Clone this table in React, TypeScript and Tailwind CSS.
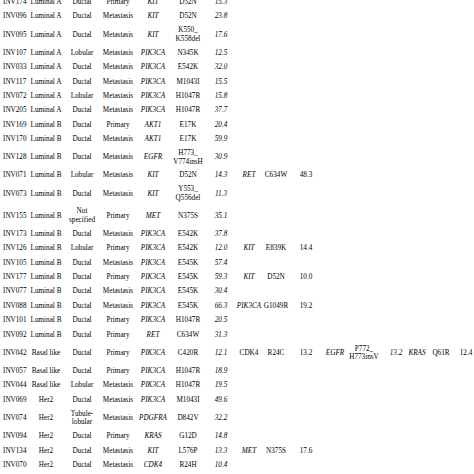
import React from "react";

type Row = { d: string[]; tall?: boolean };

const rows: Row[] = [
  { d: ["INV174", "Luminal A", "Ductal", "Primary", "KIT", "D52N", "15.3"] },
  { d: ["INV096", "Luminal A", "Ductal", "Metastasis", "KIT", "D52N", "23.8"] },
  { d: ["INV095", "Luminal A", "Ductal", "Metastasis", "KIT", "K550_|K558del", "17.6"], tall: true },
  { d: ["INV107", "Luminal A", "Lobular", "Metastasis", "PIK3CA", "N345K", "12.5"] },
  { d: ["INV033", "Luminal A", "Ductal", "Metastasis", "PIK3CA", "E542K", "32.0"] },
  { d: ["INV117", "Luminal A", "Ductal", "Metastasis", "PIK3CA", "M1043I", "15.5"] },
  { d: ["INV072", "Luminal A", "Lobular", "Metastasis", "PIK3CA", "H1047R", "15.8"] },
  { d: ["INV205", "Luminal A", "Ductal", "Metastasis", "PIK3CA", "H1047R", "37.7"] },
  { d: ["INV169", "Luminal B", "Ductal", "Primary", "AKT1", "E17K", "20.4"] },
  { d: ["INV170", "Luminal B", "Ductal", "Metastasis", "AKT1", "E17K", "59.9"] },
  { d: ["INV128", "Luminal B", "Ductal", "Metastasis", "EGFR", "H773_|V774insH", "30.9"], tall: true },
  { d: ["INV071", "Luminal B", "Lobular", "Metastasis", "KIT", "D52N", "14.3", "RET", "C634W", "48.3"] },
  { d: ["INV073", "Luminal B", "Ductal", "Metastasis", "KIT", "Y553_|Q556del", "11.3"], tall: true },
  { d: ["INV155", "Luminal B", "Not|specified", "Primary", "MET", "N375S", "35.1"], tall: true },
  { d: ["INV173", "Luminal B", "Ductal", "Metastasis", "PIK3CA", "E542K", "37.8"] },
  { d: ["INV126", "Luminal B", "Lobular", "Primary", "PIK3CA", "E542K", "12.0", "KIT", "E839K", "14.4"] },
  { d: ["INV105", "Luminal B", "Ductal", "Metastasis", "PIK3CA", "E545K", "57.4"] },
  { d: ["INV177", "Luminal B", "Ductal", "Primary", "PIK3CA", "E545K", "59.3", "KIT", "D52N", "10.0"] },
  { d: ["INV077", "Luminal B", "Ductal", "Metastasis", "PIK3CA", "E545K", "30.4"] },
  { d: ["INV088", "Luminal B", "Ductal", "Metastasis", "PIK3CA", "E545K", "66.3", "PIK3CA", "G1049R", "19.2"] },
  { d: ["INV101", "Luminal B", "Ductal", "Primary", "PIK3CA", "H1047R", "20.5"] },
  { d: ["INV092", "Luminal B", "Ductal", "Primary", "RET", "C634W", "31.3"] },
  {
    d: ["INV042", "Basal like", "Ductal", "Primary", "PIK3CA", "C420R", "12.1", "~CDK4", "R24C", "13.2", "EGFR", "P772_|H773insV", "13.2", "KRAS", "Q61R", "12.4"],
    tall: true,
  },
  { d: ["INV057", "Basal like", "Ductal", "Primary", "PIK3CA", "H1047R", "18.9"] },
  { d: ["INV044", "Basal like", "Lobular", "Metastasis", "PIK3CA", "H1047R", "19.5"] },
  { d: ["INV069", "Her2", "Ductal", "Metastasis", "PIK3CA", "M1043I", "49.6"] },
  { d: ["INV074", "Her2", "Tubule-|lobular", "Metastasis", "PDGFRA", "D842V", "32.2"], tall: true },
  { d: ["INV094", "Her2", "Ductal", "Primary", "KRAS", "G12D", "14.8"] },
  { d: ["INV134", "Her2", "Ductal", "Metastasis", "KIT", "L576P", "13.3", "MET", "N375S", "17.6"] },
  { d: ["INV070", "Her2", "Ductal", "Metastasis", "CDK4", "R24H", "10.4"] },
];

const italicCols = new Set([4, 6, 7, 10, 12, 13]);

function Cell({ value, col }: { value: string; col: number }) {
  let v = value;
  let italic = italicCols.has(col);
  if (v.startsWith("~")) {
    v = v.slice(1);
    italic = false;
  }
  const lines = v.split("|");
  return (
    <div
      className={
        (col === 0 ? "items-start pl-[3px] " : "items-center ") +
        "flex flex-col justify-center whitespace-nowrap leading-[8.5px] " +
        (italic ? "italic" : "")
      }
    >
      {lines.map((l, i) => (
        <div key={i}>{l}</div>
      ))}
    </div>
  );
}

export default function App() {
  return (
    <div className="w-[474px] h-[474px] overflow-hidden bg-white">
      <div
        className="-mt-[5px] w-[480px] text-[7.2px] text-black"
        style={{ fontFamily: '"Liberation Serif", "Times New Roman", serif' }}
      >
        {rows.map((r, ri) => (
          <div
            key={ri}
            className={
              "grid grid-cols-[20px_52px_20px_52px_18px_52px_14px_42px_12px_48px_10px_48px_16px_26px_22px_28px] " +
              (r.tall ? "h-[22px]" : "h-[14.4px]")
            }
          >
            {Array.from({ length: 16 }).map((_, ci) => (
              <Cell key={ci} value={r.d[ci] ?? ""} col={ci} />
            ))}
          </div>
        ))}
      </div>
    </div>
  );
}
